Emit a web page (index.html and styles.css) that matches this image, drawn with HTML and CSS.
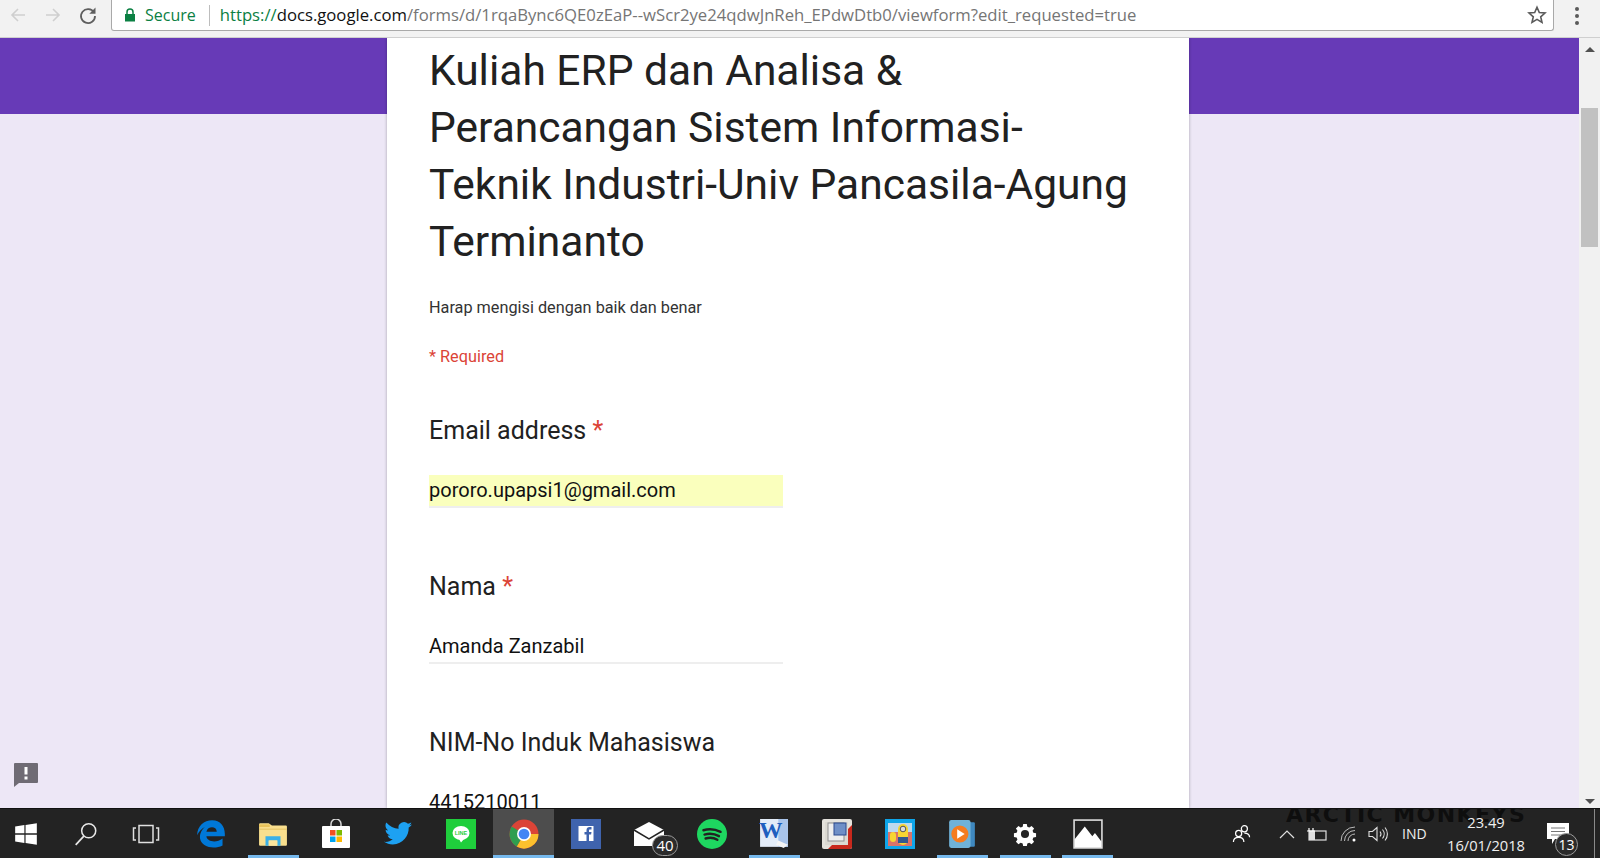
FILE: index.html
```html
<!DOCTYPE html>
<html lang="en">
<head>
<meta charset="UTF-8">
<meta name="viewport" content="width=device-width, initial-scale=1.0">
<title>Kuliah ERP dan Analisa</title>
<link rel="stylesheet" href="styles.css">
</head>
<body>
<div class="toolbar">
    <div class="nav">
        <svg class="nav-icon" viewBox="0 0 20 20"><path d="M17 10H4M10 4l-6 6 6 6" fill="none" stroke="#cfcfcf" stroke-width="1.6"/></svg>
        <svg class="nav-icon" viewBox="0 0 20 20"><path d="M3 10h13M10 4l6 6-6 6" fill="none" stroke="#cfcfcf" stroke-width="1.6"/></svg>
        <svg class="nav-icon" viewBox="0 0 20 20"><path d="M16 7.5A7 7 0 1 0 17 11" fill="none" stroke="#5f5f5f" stroke-width="1.8"/><path d="M17.5 2.5v6.2h-6.2z" fill="#5f5f5f"/></svg>
    </div>
    <div class="omnibox">
        <svg class="lock" viewBox="0 0 12 14"><path d="M3 6V4a3 3 0 0 1 6 0v2" fill="none" stroke="#0b8043" stroke-width="1.5"/><rect x="1" y="6" width="10" height="7.5" fill="#0b8043"/></svg>
        <span class="secure">Secure</span>
        <span class="url"><span class="scheme">https://</span><span class="host">docs.google.com</span>/forms/d/1rqaBync6QE0zEaP--wScr2ye24qdwJnReh_EPdwDtb0/viewform?edit_requested=true</span>
        <svg class="star" viewBox="0 0 20 20"><path d="M10 2.2l2.3 5.3 5.7.5-4.3 3.8 1.3 5.6-5-3-5 3 1.3-5.6L2 8l5.7-.5z" fill="none" stroke="#5a5a5a" stroke-width="1.6"/></svg>
    </div>
    <div class="menu-dots"><i></i><i></i><i></i></div>
</div>

<div class="viewport">
    <div class="page">
        <div class="card">
            <h1 class="form-title">Kuliah ERP dan Analisa &amp; Perancangan Sistem Informasi-Teknik Industri-Univ Pancasila-Agung Terminanto</h1>
            <p class="form-desc">Harap mengisi dengan baik dan benar</p>
            <p class="form-required">* Required</p>

            <div class="questions">
                <div class="question">
                    <div class="q-label">Email address <span class="star-mark">*</span></div>
                    <div class="q-input autofill">pororo.upapsi1@gmail.com</div>
                </div>
                <div class="question">
                    <div class="q-label">Nama <span class="star-mark">*</span></div>
                    <div class="q-input">Amanda Zanzabil</div>
                </div>
                <div class="question">
                    <div class="q-label">NIM-No Induk Mahasiswa</div>
                    <div class="q-input">4415210011</div>
                </div>
            </div>
        </div>
        <svg class="feedback" viewBox="0 0 26 26"><path d="M2 1h22a1 1 0 0 1 1 1v18a1 1 0 0 1-1 1H6l-5 4V2a1 1 0 0 1 1-1z" fill="#6f6b74"/><rect x="11.5" y="5" width="3" height="7.5" fill="#fff"/><rect x="11.5" y="14.5" width="3" height="3" fill="#fff"/></svg>
    </div>
    <div class="scrollbar">
        <span class="arrow-up"></span>
        <div class="thumb"></div>
        <span class="arrow-down"></span>
    </div>
</div>

<div class="taskbar">
    <div class="wallpaper-text">ARCTIC MONKEYS</div>
    <div class="sys-btn start">
        <svg class="ico" viewBox="0 0 24 24"><path d="M2 5l8.5-1.2V11.4H2zM11.6 3.6L22 2v9.4H11.6zM2 12.6h8.5v7.6L2 19zM11.6 12.6H22V22l-10.4-1.6z" fill="#fff"/></svg>
    </div>
    <div class="sys-btn search">
        <svg class="ico" viewBox="0 0 24 24"><circle cx="14.5" cy="9" r="6.5" fill="none" stroke="#e8e8e8" stroke-width="1.4"/><path d="M10 14L2.5 22" stroke="#e8e8e8" stroke-width="1.6"/></svg>
    </div>
    <div class="sys-btn taskview">
        <svg class="ico wide" viewBox="0 0 28 20"><rect x="7" y="1.5" width="14" height="17" fill="none" stroke="#e0e0e0" stroke-width="1.5"/><path d="M4 4H1.5v12H4M24 4h2.5v12H24" fill="none" stroke="#e0e0e0" stroke-width="1.5"/></svg>
    </div>

    <div class="apps">
        <div class="app">
            <svg class="ico" viewBox="0 0 26 26"><path d="M1 14C1 6 7 1 14 1c7 0 11 5 11 12v2H9c.5 5 9 6 14 2v6c-7 3.5-18 2-19.5-6C3 13 5 9 8 7c-3 1-5.5 4-7 7zM9 11h9c0-5-8-5-9 0z" fill="#0078d7"/></svg>
        </div>
        <div class="app running">
            <svg class="ico" viewBox="0 0 28 24"><path d="M1 3a1 1 0 0 1 1-1h8l3 2h13a1 1 0 0 1 1 1v17a1 1 0 0 1-1 1H2a1 1 0 0 1-1-1z" fill="#f9df8e"/><path d="M1 3h10v2.5H1z" fill="#e8c25a"/><path d="M1 7h26v1H1z" fill="#e6c466"/><path d="M7 23V14h14v9h-3v-5h-8v5z" fill="#3ab0e8"/><rect x="10" y="18" width="8" height="5" fill="#fbe59c"/></svg>
        </div>
        <div class="app">
            <svg class="ico" viewBox="0 0 30 30"><path d="M10 8V5a5 5 0 0 1 10 0v3" fill="none" stroke="#d8d8d8" stroke-width="1.5"/><rect x="1" y="7" width="28" height="22" rx="1" fill="#fff"/><rect x="9" y="11" width="5.5" height="5.5" fill="#f25022"/><rect x="15.5" y="11" width="5.5" height="5.5" fill="#7fba00"/><rect x="9" y="17.5" width="5.5" height="5.5" fill="#00a4ef"/><rect x="15.5" y="17.5" width="5.5" height="5.5" fill="#ffb900"/></svg>
        </div>
        <div class="app">
            <svg class="ico" viewBox="0 0 30 26"><path d="M29 3.5c-1 .5-2 .8-3 1 1-.7 2-1.8 2.3-3-1 .6-2.2 1-3.3 1.3A5.5 5.5 0 0 0 15.6 7.8C11 7.6 6.5 5.4 3.3 1.6c-1.5 2.6-.8 6 1.8 7.8-.9 0-1.8-.3-2.5-.7 0 2.7 1.9 5 4.5 5.6-.8.2-1.7.3-2.5.1.7 2.3 2.8 3.9 5.2 3.9C7.5 20.2 4.5 21.2 1 20.8c2.5 1.6 5.5 2.6 8.7 2.6 10.5 0 16.4-8.9 16-16.8 1.2-.8 2.3-1.9 3.3-3.1z" fill="#1da1f2"/></svg>
        </div>
        <div class="app">
            <svg class="ico square" viewBox="0 0 30 30"><rect width="30" height="30" fill="#1fce3c"/><ellipse cx="15" cy="14" rx="8.5" ry="7" fill="#fff"/><path d="M13 20l2 3.5 3-3.5z" fill="#fff"/><text class="line-word" x="15" y="16.2" text-anchor="middle">LINE</text></svg>
        </div>
        <div class="app active running">
            <svg class="ico" viewBox="0 0 28 28"><circle cx="14" cy="14" r="13.5" fill="#db4437"/><path d="M14 14L27.5 14A13.5 13.5 0 0 1 7.2 25.7z" fill="#fbc02d"/><path d="M14 14L7.2 25.7A13.5 13.5 0 0 1 2.5 7z" fill="#2e9e4f"/><circle cx="14" cy="14" r="6.5" fill="#fff"/><circle cx="14" cy="14" r="5" fill="#4285f4"/></svg>
        </div>
        <div class="app">
            <svg class="ico square" viewBox="0 0 30 30"><rect width="30" height="30" fill="#3f63ad"/><rect x="7.5" y="7" width="15" height="15" fill="#fff"/><path d="M15.5 22v-6.5h-2V13h2v-2c0-2 1.3-3 3-3h2v2.5h-1.5c-.8 0-1 .4-1 1V13h2.5l-.4 2.5h-2.1V22z" fill="#3f63ad"/></svg>
        </div>
        <div class="app">
            <span class="mail-wrap">
                <svg class="ico mail-ico" viewBox="0 0 32 26"><path d="M1 9L16 1l15 8v16H1z" fill="#fff"/><path d="M1 9l15 9 15-9" fill="none" stroke="#232323" stroke-width="1.5"/></svg>
                <span class="badge mail-badge">40</span>
            </span>
        </div>
        <div class="app">
            <svg class="ico" viewBox="0 0 28 28"><circle cx="14" cy="14" r="14" fill="#1ed760"/><path d="M6 10.5c5-1.5 11-1 16 1.5M7 14.5c4.5-1.2 9.5-.7 13.5 1.5M8 18.2c3.5-1 8-.6 11 1.2" fill="none" stroke="#222" stroke-width="2.2" stroke-linecap="round"/></svg>
        </div>
        <div class="app running">
            <svg class="ico" viewBox="0 0 28 28"><rect x="1" y="0" width="26" height="26" fill="#e3ecf8"/><path d="M18 0h9v26H18z" fill="#a9c4ea"/><text class="word-w" x="11" y="18" text-anchor="middle">W</text><path d="M18 20l9 4-4 3-7-3z" fill="#f4f4f4"/></svg>
        </div>
        <div class="app">
            <svg class="ico" viewBox="0 0 30 30"><rect width="30" height="30" rx="2" fill="#e4e2dc"/><path d="M30 6v22a2 2 0 0 1-2 2H6z" fill="#c8281c"/><rect x="3" y="3" width="23" height="23" fill="#dbd9d2"/><rect x="6" y="4" width="16" height="18" fill="#eeeeee" stroke="#8f8f8f"/><rect x="12" y="4" width="12" height="12" fill="#6f8fc7" stroke="#2d4a8f"/></svg>
        </div>
        <div class="app">
            <svg class="ico square" viewBox="0 0 30 30"><rect width="30" height="30" fill="#0ea5e9"/><rect x="3" y="4" width="24" height="23" fill="#d9736a"/><rect x="3" y="4" width="24" height="9" fill="#bcd9ee"/><rect x="13" y="5" width="10" height="21" rx="5" fill="#f6d532"/><circle cx="18" cy="10" r="2.8" fill="#ddd" stroke="#555"/><rect x="13" y="18" width="10" height="6" fill="#33598f"/><rect x="5" y="13" width="6" height="10" rx="3" fill="#f6d532"/></svg>
        </div>
        <div class="app running">
            <svg class="ico" viewBox="0 0 26 28"><rect x="5" y="3" width="20" height="23" rx="1" fill="#3f88bf"/><rect x="1" y="1" width="20" height="26" rx="2" fill="#6fb2d8"/><circle cx="11" cy="14" r="8" fill="#f57c1f"/><path d="M8.5 9.5l7 4.5-7 4.5z" fill="#fff"/></svg>
        </div>
        <div class="app running">
            <svg class="ico gear" viewBox="0 0 24 24"><path fill="#fff" fill-rule="evenodd" d="M10 1h4l.6 3 2.2.9 2.5-1.7 2.8 2.8-1.7 2.5.9 2.2 3 .6v4l-3 .6-.9 2.2 1.7 2.5-2.8 2.8-2.5-1.7-2.2.9-.6 3h-4l-.6-3-2.2-.9-2.5 1.7-2.8-2.8 1.7-2.5-.9-2.2-3-.6v-4l3-.6.9-2.2-1.7-2.5L4.7 3.2l2.5 1.7 2.2-.9zM12 7.5a4.5 4.5 0 1 0 0 9 4.5 4.5 0 0 0 0-9z" transform="translate(1.2 1.2) scale(.9)"/></svg>
        </div>
        <div class="app running">
            <svg class="ico" viewBox="0 0 28 28"><rect x="1" y="1" width="26" height="26" fill="#222" stroke="#dcdcdc" stroke-width="1.5"/><path d="M1.5 26.5V19L11 7l7 9 2.5-3L26.5 21v5.5z" fill="#fff"/></svg>
        </div>
    </div>

    <div class="tray">
        <svg class="tray-ico people" viewBox="0 0 20 20"><circle cx="13" cy="5" r="3.2" fill="none" stroke="#fff" stroke-width="1.3"/><circle cx="7" cy="10" r="3.2" fill="none" stroke="#fff" stroke-width="1.3"/><path d="M1.5 19c0-3 2-5 5.5-5s5.5 2 5.5 5M13 9.5c3 0 5.5 1.5 5.5 4.5" fill="none" stroke="#fff" stroke-width="1.3"/></svg>
        <svg class="tray-ico chevron" viewBox="0 0 16 10"><path d="M1 9l7-7 7 7" fill="none" stroke="#e0e0e0" stroke-width="1.2"/></svg>
        <svg class="tray-ico battery" viewBox="0 0 22 14"><rect x="3" y="4" width="17" height="9" fill="none" stroke="#e0e0e0" stroke-width="1.2"/><rect x="3" y="4" width="6" height="9" fill="#e0e0e0"/><path d="M1 4h8M3 1v3M7 1v3" stroke="#fff" stroke-width="1.2"/></svg>
        <svg class="tray-ico wifi" viewBox="0 0 16 16"><path d="M1 15A14 14 0 0 1 15 1M4.5 15A10.5 10.5 0 0 1 15 4.5M8 15a7 7 0 0 1 7-7" fill="none" stroke="#bbb" stroke-width="1"/><circle cx="14" cy="14" r="1.5" fill="#fff"/></svg>
        <svg class="tray-ico volume" viewBox="0 0 20 16"><path d="M1 5.5h3.5L9 1.5v13l-4.5-4H1z" fill="none" stroke="#e0e0e0" stroke-width="1.1"/><path d="M12 5.5a4 4 0 0 1 0 5M14.5 3.5a7 7 0 0 1 0 9M17 1.5a10 10 0 0 1 0 13" fill="none" stroke="#e0e0e0" stroke-width="1.1"/></svg>
        <span class="lang">IND</span>
        <div class="clock">
            <span>23.49</span>
            <span>16/01/2018</span>
        </div>
        <span class="notif">
            <svg class="tray-ico notif-ico" viewBox="0 0 24 24"><path d="M1 1h22v16H9l-3 5v-5H1z" fill="#fff"/><path d="M5 6h14M5 9.5h14M5 13h10" stroke="#777" stroke-width="1"/></svg>
            <span class="badge notif-badge">13</span>
        </span>
        <span class="show-desktop"></span>
    </div>
</div>
</body>
</html>
```

FILE: styles.css
```css
html, body {
    margin: 0;
    height: 100%;
    overflow: hidden;
}

body {
    display: flex;
    flex-direction: column;
    width: 1600px;
    height: 858px;
    font-family: Roboto, "Liberation Sans", sans-serif;
    color: #212121;
    background: #fff;
}

/* browser chrome */
.toolbar {
    flex: 0 0 38px;
    box-sizing: border-box;
    display: flex;
    background: #f2f2f2;
    border-bottom: 1px solid #cfcfcf;
}

.nav {
    flex: 0 0 111px;
    display: flex;
    align-items: flex-start;
    padding: 5px 0 0 8px;
    box-sizing: border-box;
    gap: 15px;
}

.nav-icon {
    width: 20px;
    height: 20px;
}

.omnibox {
    flex: 0 0 1443px;
    height: 31px;
    box-sizing: border-box;
    display: flex;
    align-items: center;
    padding-left: 12px;
    background: #fff;
    border: 1px solid #a9a9a9;
    border-top: none;
    border-radius: 0 0 3px 3px;
    font-family: "Open Sans", "Noto Sans", sans-serif;
    font-size: 16px;
}

.lock {
    width: 12px;
    height: 14px;
}

.secure {
    margin-left: 9px;
    padding-right: 13px;
    color: #0b8043;
    border-right: 1px solid #bdbdbd;
    line-height: 21px;
}

.url {
    margin-left: 10px;
    margin-bottom: 1px;
    color: #757575;
    font-size: 16.7px;
    white-space: nowrap;
}

.scheme {
    color: #0b8043;
}

.host {
    color: #111;
}

.star {
    width: 20px;
    height: 20px;
    margin-left: auto;
    margin-right: 6px;
}

.menu-dots {
    flex: 1;
    display: flex;
    flex-direction: column;
    align-items: center;
    gap: 3px;
    padding-top: 7px;
}

.menu-dots i {
    width: 4px;
    height: 4px;
    border-radius: 50%;
    background: #5a5a5a;
}

/* page */
.viewport {
    flex: 1;
    min-height: 0;
    display: flex;
}

.page {
    flex: 1;
    position: relative;
    overflow: hidden;
    background: linear-gradient(#673ab7 76px, #ede7f6 76px);
}

.card {
    box-sizing: border-box;
    width: 802px;
    height: 100%;
    margin-left: 387px;
    padding: 4px 50px 0 42px;
    background: #fff;
    box-shadow: 0 0 3px rgba(0, 0, 0, 0.3);
}

.form-title {
    margin: 0;
    font-size: 42.5px;
    font-weight: 400;
    line-height: 57px;
    color: #212121;
}

.form-desc {
    margin: 26px 0 0;
    font-size: 16.25px;
    line-height: 24px;
    color: #333;
}

.form-required {
    margin: 25px 0 0;
    font-size: 16.3px;
    line-height: 24px;
    color: #db4437;
}

.questions {
    display: flex;
    flex-direction: column;
    gap: 64px;
    margin-top: 47px;
}

.q-label {
    font-size: 25px;
    line-height: 30px;
    color: #212121;
}

.star-mark {
    color: #db4437;
}

.q-input {
    width: 354px;
    height: 31px;
    margin-top: 29px;
    line-height: 31px;
    font-size: 20px;
    border-bottom: 2px solid #eeeeee;
    color: #111;
}

.autofill {
    background: #faffbd;
}

.feedback {
    position: absolute;
    left: 13px;
    top: 724px;
    width: 26px;
    height: 26px;
}

.scrollbar {
    flex: 0 0 21px;
    position: relative;
    background: #f1f1f1;
}

.thumb {
    position: absolute;
    left: 2px;
    top: 70px;
    width: 17px;
    height: 139px;
    background: #c1c1c1;
}

.arrow-up, .arrow-down {
    position: absolute;
    left: 6px;
    width: 0;
    height: 0;
    border-left: 5px solid transparent;
    border-right: 5px solid transparent;
}

.arrow-up {
    top: 9px;
    border-bottom: 5px solid #505050;
}

.arrow-down {
    bottom: 4px;
    border-top: 5px solid #505050;
}

/* windows taskbar */
.taskbar {
    flex: 0 0 50px;
    position: relative;
    overflow: hidden;
    display: flex;
    background: #232323;
    color: #f0f0f0;
    font-family: "Open Sans", "Noto Sans", sans-serif;
    border-top: 1px solid #111;
    box-sizing: border-box;
}

.wallpaper-text {
    position: absolute;
    left: 1286px;
    top: -9px;
    font-family: "DejaVu Sans", sans-serif;
    font-weight: 700;
    font-size: 22px;
    line-height: 30px;
    letter-spacing: 1.45px;
    color: #0e0e0e;
    white-space: nowrap;
}

.sys-btn {
    display: flex;
    align-items: center;
    justify-content: center;
}

.start {
    width: 52px;
}

.search {
    width: 68px;
}

.taskview {
    width: 52px;
}

.ico {
    width: 26px;
    height: 26px;
}

.ico.wide {
    width: 28px;
    height: 20px;
}

.apps {
    display: flex;
    gap: 1.67px;
    margin-left: 8px;
}

.app {
    position: relative;
    width: 61px;
    display: flex;
    align-items: center;
    justify-content: center;
}

.app .ico {
    width: 30px;
    height: 30px;
}

.app .ico.mail-ico {
    width: 32px;
    height: 26px;
}

.app .ico.gear {
    width: 24px;
    height: 24px;
}

.app.active {
    background: #4d4d4d;
}

.app.running::after {
    content: "";
    position: absolute;
    left: 5px;
    right: 5px;
    bottom: 0;
    height: 3px;
    background: #76b9ed;
}

.app.active::after {
    left: 0;
    right: 0;
}

.line-word {
    font-family: "Liberation Sans", sans-serif;
    font-size: 5.5px;
    font-weight: 700;
    fill: #1fce3c;
}

.word-w {
    font-family: "Liberation Serif", serif;
    font-size: 22px;
    font-weight: 700;
    fill: #1f5fbf;
}

.mail-wrap {
    position: relative;
    display: flex;
}

.badge {
    position: absolute;
    box-sizing: border-box;
    display: flex;
    align-items: center;
    justify-content: center;
    border-radius: 50%;
    background: #2b2b2b;
    border: 1px solid #9a9a9a;
    color: #fff;
}

.mail-badge {
    left: 19px;
    top: 14px;
    width: 26px;
    height: 21px;
    border-radius: 12px;
    font-size: 15px;
}

.tray {
    position: relative;
    margin-left: auto;
    display: flex;
    align-items: center;
}

.tray-ico {
    display: block;
}

.people {
    width: 19px;
    height: 19px;
    margin-right: 28px;
}

.chevron {
    width: 16px;
    height: 10px;
    margin-right: 11px;
}

.battery {
    width: 22px;
    height: 14px;
    margin-right: 12px;
}

.wifi {
    width: 16px;
    height: 16px;
    margin-right: 12px;
}

.volume {
    width: 20px;
    height: 16px;
    margin-right: 14px;
}

.lang {
    width: 26px;
    margin-right: 16px;
    font-size: 14px;
}

.clock {
    width: 84px;
    display: flex;
    flex-direction: column;
    align-items: center;
    font-size: 14.7px;
    line-height: 23px;
}

.notif {
    position: relative;
    display: block;
    margin-left: 18px;
    margin-right: 24px;
}

.notif-ico {
    width: 24px;
    height: 24px;
}

.notif-badge {
    left: 9px;
    top: 11px;
    width: 23px;
    height: 23px;
    font-size: 14px;
}

.show-desktop {
    width: 1px;
    height: 100%;
    margin-right: 5px;
    background: #8a8a8a;
}
```
